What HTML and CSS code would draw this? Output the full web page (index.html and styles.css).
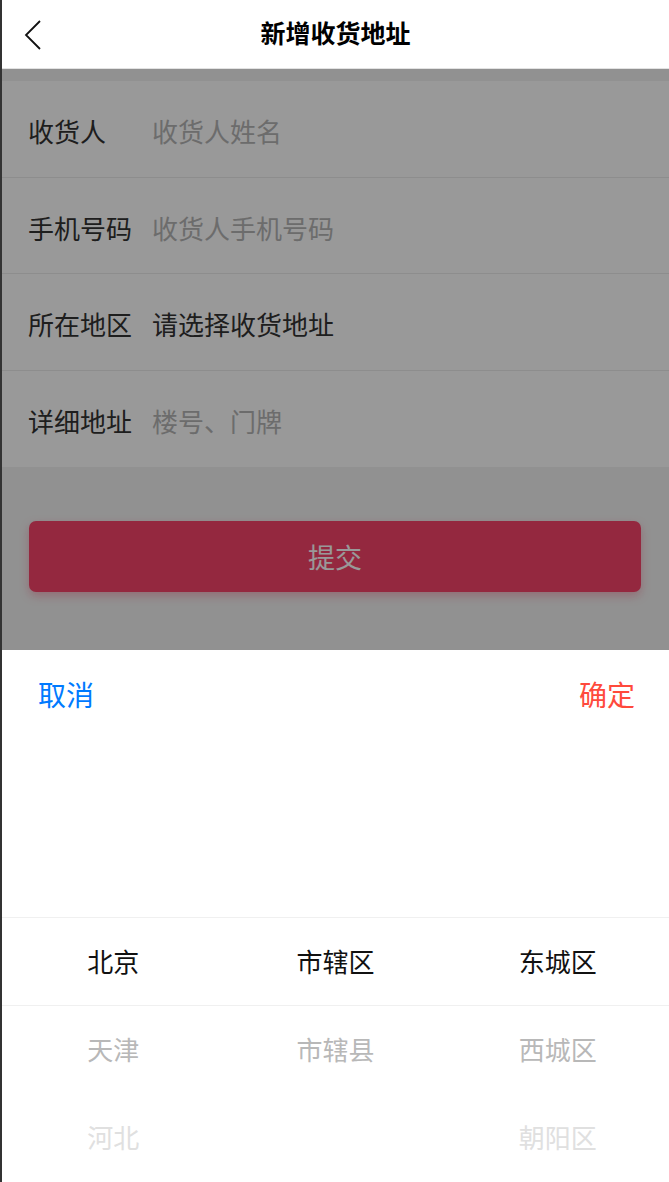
FILE: index.html
```html
<!DOCTYPE html>
<html lang="zh-CN">
<head>
<meta charset="utf-8">
<title>新增收货地址</title>
<link rel="stylesheet" href="styles.css">
</head>
<body>
<div class="app">
  <header class="header">
    <span class="back">
      <svg width="20" height="32" viewBox="0 0 20 32"><path d="M16 2 L2 16 L16 30" fill="none" stroke="#111" stroke-width="1.8"/></svg>
    </span>
    <h1 class="title">新增收货地址</h1>
    <span></span>
  </header>

  <div class="form">
    <div class="row"><span class="label">收货人</span><span class="ph">收货人姓名</span></div>
    <div class="row"><span class="label">手机号码</span><span class="ph">收货人手机号码</span></div>
    <div class="row"><span class="label">所在地区</span><span class="val">请选择收货地址</span></div>
    <div class="row last"><span class="label">详细地址</span><span class="ph">楼号、门牌</span></div>
  </div>

  <div class="btn-wrap"><button class="submit">提交</button></div>

  <div class="mask"></div>

  <div class="picker">
    <div class="toolbar">
      <span class="cancel">取消</span>
      <span class="confirm">确定</span>
    </div>
    <div class="columns">
      <div class="indicator"></div>
      <ul class="col">
        <li></li><li></li>
        <li class="sel">北京</li>
        <li class="n1">天津</li>
        <li class="n2">河北</li>
      </ul>
      <ul class="col">
        <li></li><li></li>
        <li class="sel">市辖区</li>
        <li class="n1">市辖县</li>
        <li class="n2"></li>
      </ul>
      <ul class="col">
        <li></li><li></li>
        <li class="sel">东城区</li>
        <li class="n1">西城区</li>
        <li class="n2">朝阳区</li>
      </ul>
    </div>
  </div>
</div>
</body>
</html>
```

FILE: styles.css
```css
html, body {
  margin: 0;
  padding: 0;
}
body {
  font-family: "Noto Sans CJK SC", "Noto Sans", sans-serif;
  background: #f2f2f2;
  color: #333;
}
.app {
  position: relative;
  box-sizing: border-box;
  height: 1182px;
  border-left: 2px solid #333;
  background: #f2f2f2;
  overflow: hidden;
}
.header {
  box-sizing: border-box;
  height: 69px;
  background: #fff;
  border-bottom: 1px solid #e2e2e2;
  display: grid;
  grid-template-columns: 1fr auto 1fr;
  align-items: center;
}
.back {
  display: flex;
  align-items: center;
  padding-left: 22px;
  padding-top: 2px;
}
.title {
  margin: 0;
  padding-bottom: 4px;
  font-size: 25px;
  font-weight: 700;
  color: #000;
  line-height: 1;
}
.form {
  margin-top: 12px;
  background: #fff;
}
.row {
  box-sizing: border-box;
  height: 96.5px;
  display: flex;
  align-items: center;
  padding-left: 26px;
  padding-top: 4px;
  border-bottom: 1px solid #ececec;
  font-size: 26px;
}
.row.last {
  border-bottom: none;
}
.label {
  width: 124px;
  color: #333;
}
.ph {
  color: #b5b5b5;
}
.val {
  color: #333;
}
.btn-wrap {
  padding: 54px 28px 0 27px;
}
.submit {
  display: block;
  width: 100%;
  height: 71px;
  border: none;
  border-radius: 7px;
  background: #f7446a;
  color: #fff;
  font-family: inherit;
  font-size: 27px;
  box-shadow: 0 4px 10px rgba(247, 68, 106, 0.35);
}
.mask {
  position: absolute;
  top: 69px;
  left: 0;
  right: 0;
  bottom: 0;
  background: rgba(0, 0, 0, 0.4);
}
.picker {
  position: absolute;
  left: 0;
  right: 0;
  bottom: 0;
  height: 532px;
  background: #fff;
}
.toolbar {
  box-sizing: border-box;
  height: 91px;
  display: flex;
  justify-content: space-between;
  align-items: center;
  padding: 0 34px 4px 36px;
  font-size: 28px;
}
.cancel {
  color: #007aff;
}
.confirm {
  color: #ff4a3c;
}
.columns {
  position: relative;
  display: grid;
  grid-template-columns: 1fr 1fr 1fr;
}
.indicator {
  position: absolute;
  left: 0;
  right: 0;
  top: 176px;
  height: 87px;
  border-top: 1px solid #f0f0f0;
  border-bottom: 1px solid #f0f0f0;
  pointer-events: none;
}
.col {
  list-style: none;
  margin: 0;
  padding: 0;
}
.col li {
  height: 88px;
  line-height: 88px;
  text-align: center;
  font-size: 26px;
  color: #111;
}
.col li.n1 {
  color: #b8b8b8;
}
.col li.n2 {
  color: #e0e0e0;
}
```
